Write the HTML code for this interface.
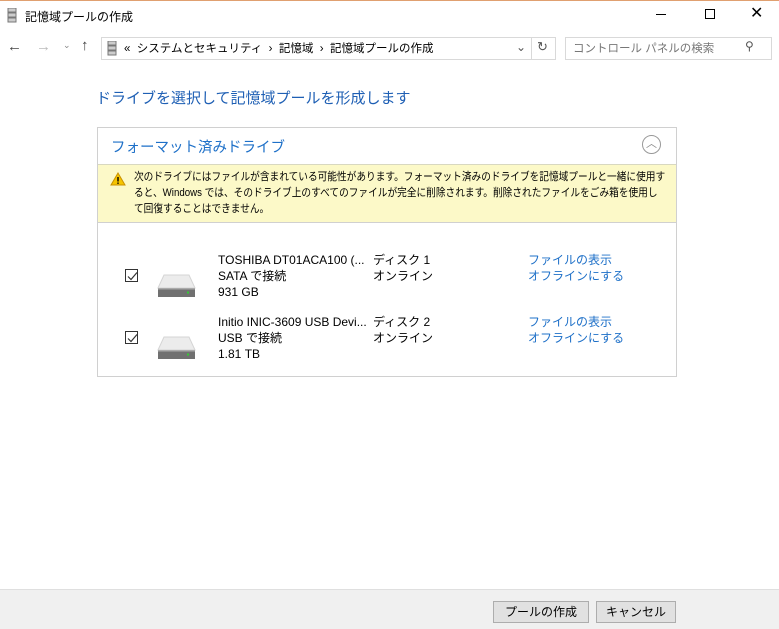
<!DOCTYPE html>
<html><head><meta charset="utf-8"><style>
*{margin:0;padding:0;box-sizing:border-box}
body{width:779px;height:629px;background:#fff;font-family:"Liberation Sans","Noto Sans CJK JP",sans-serif;font-size:12px;color:#000;position:relative;overflow:hidden}
.a{position:absolute;white-space:nowrap}
.blue{color:#0066cc}
.btn{position:absolute;height:22px;border:1px solid #adadad;background:#e1e1e1;text-align:center;line-height:20px;font-size:12px}
.cb{position:absolute;width:13px;height:13px;border:1px solid #333;background:#fff}
.cb svg{position:absolute;left:1px;top:1px}
</style></head><body>
<div class="a" style="left:0;top:0;width:779px;height:1px;background:#e0a070"></div>
<svg class="a" style="left:7px;top:8px" width="10" height="15"><rect x="1" y="0" width="8" height="4" fill="#ccc" stroke="#777"/><rect x="1" y="5" width="8" height="4" fill="#ccc" stroke="#777"/><rect x="1" y="10" width="8" height="4" fill="#ccc" stroke="#777"/></svg>
<div class="a" style="left:25px;top:8px">記憶域プールの作成</div>
<div class="a" style="left:656px;top:14px;width:10px;height:1px;background:#000"></div>
<div class="a" style="left:705px;top:9px;width:10px;height:10px;border:1px solid #000"></div>
<div class="a" style="left:750px;top:3px;font-size:16px">✕</div>
<div class="a" style="left:7px;top:38px;font-size:15px;color:#444">←</div>
<div class="a" style="left:36px;top:38px;font-size:15px;color:#bbb">→</div>
<div class="a" style="left:63px;top:40px;font-size:9px;color:#888">⌄</div>
<div class="a" style="left:81px;top:37px;font-size:15px;color:#444">↑</div>
<div class="a" style="left:101px;top:37px;width:455px;height:23px;border:1px solid #d9d9d9"></div>
<div class="a" style="left:531px;top:37px;width:1px;height:23px;background:#d9d9d9"></div>
<svg class="a" style="left:107px;top:41px" width="10" height="15"><rect x="1" y="0" width="8" height="4" fill="#ccc" stroke="#777"/><rect x="1" y="5" width="8" height="4" fill="#ccc" stroke="#777"/><rect x="1" y="10" width="8" height="4" fill="#ccc" stroke="#777"/></svg>
<div class="a" style="left:124px;top:40px;font-size:11.5px">« &nbsp;システムとセキュリティ &nbsp;›&nbsp; 記憶域 &nbsp;›&nbsp; 記憶域プールの作成</div>
<div class="a" style="left:516px;top:40px;color:#555">⌄</div>
<div class="a" style="left:537px;top:39px;color:#555;font-size:13px">↻</div>
<div class="a" style="left:565px;top:37px;width:207px;height:23px;border:1px solid #d9d9d9"></div>
<div class="a" style="left:573px;top:40px;color:#777;font-size:11.5px">コントロール パネルの検索</div>
<div class="a" style="left:745px;top:39px;color:#555">⚲</div>
<div class="a blue" style="left:96px;top:87px;font-size:15px;color:#1e5fb4">ドライブを選択して記憶域プールを形成します</div>
<div class="a" style="left:97px;top:127px;width:580px;height:250px;border:1px solid #d0d0d0"></div>
<div class="a" style="left:111px;top:136px;font-size:14.5px;color:#1e70c8">フォーマット済みドライブ</div>
<div class="a" style="left:642px;top:135px;width:19px;height:19px;border:1px solid #999;border-radius:50%;text-align:center;font-size:11px;line-height:17px;color:#888">︿</div>
<div class="a" style="left:98px;top:164px;width:578px;height:59px;background:#fcf9c8;border-top:1px solid #d8d8c0;border-bottom:1px solid #d0d0d0"></div>
<svg class="a" style="left:110px;top:172px" width="16" height="14"><path d="M8 1L15 13H1Z" fill="#f5c400" stroke="#c89000"/><rect x="7.3" y="5" width="1.4" height="4.5" fill="#000"/><rect x="7.3" y="10.5" width="1.4" height="1.4" fill="#000"/></svg>
<div class="a" style="left:134px;top:169px;line-height:16px;font-size:11px;transform:scaleX(0.88);transform-origin:0 0">次のドライブにはファイルが含まれている可能性があります。フォーマット済みのドライブを記憶域プールと一緒に使用す<br>ると、Windows では、そのドライブ上のすべてのファイルが完全に削除されます。削除されたファイルをごみ箱を使用し<br>て回復することはできません。</div>
<div class="cb" style="left:125px;top:269px"><svg width="11" height="11"><path d="M1 5.5L4 8.5L10 1.5" stroke="#333" fill="none" stroke-width="1.2"/></svg></div>
<div class="cb" style="left:125px;top:331px"><svg width="11" height="11"><path d="M1 5.5L4 8.5L10 1.5" stroke="#333" fill="none" stroke-width="1.2"/></svg></div>
<svg class="a" style="left:157px;top:274px" width="40" height="26"><path d="M7 1H32L38 14H1Z" fill="#ececec" stroke="#d5d5d5"/><rect x="1" y="14" width="37" height="9" fill="#707070"/><rect x="1" y="14" width="37" height="1.5" fill="#aaa"/><rect x="30" y="17.5" width="2" height="2" fill="#3c3"/></svg>
<svg class="a" style="left:157px;top:336px" width="40" height="26"><path d="M7 1H32L38 14H1Z" fill="#ececec" stroke="#d5d5d5"/><rect x="1" y="14" width="37" height="9" fill="#707070"/><rect x="1" y="14" width="37" height="1.5" fill="#aaa"/><rect x="30" y="17.5" width="2" height="2" fill="#3c3"/></svg>
<div class="a" style="left:218px;top:252px;line-height:16px">TOSHIBA DT01ACA100 (...<br>SATA で接続<br>931 GB</div>
<div class="a" style="left:373px;top:252px;line-height:16px">ディスク 1<br>オンライン</div>
<div class="a blue" style="left:528px;top:252px;line-height:16px;color:#1e70c8">ファイルの表示<br>オフラインにする</div>
<div class="a" style="left:218px;top:314px;line-height:16px">Initio INIC-3609 USB Devi...<br>USB で接続<br>1.81 TB</div>
<div class="a" style="left:373px;top:314px;line-height:16px">ディスク 2<br>オンライン</div>
<div class="a blue" style="left:528px;top:314px;line-height:16px;color:#1e70c8">ファイルの表示<br>オフラインにする</div>
<div class="a" style="left:0;top:589px;width:779px;height:40px;background:#f0f0f0;border-top:1px solid #dfdfdf"></div>
<div class="btn" style="left:493px;top:601px;width:96px">プールの作成</div>
<div class="btn" style="left:596px;top:601px;width:80px">キャンセル</div>
</body></html>
